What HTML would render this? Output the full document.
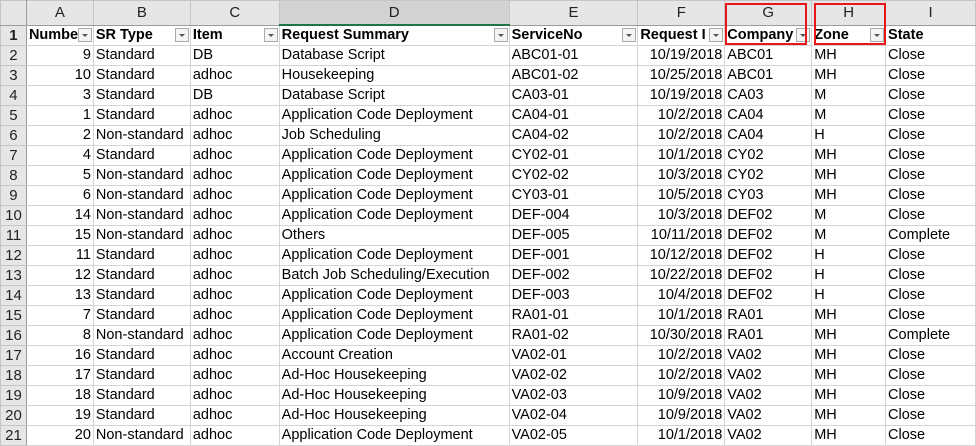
<!DOCTYPE html><html><head><style>
body{margin:0;width:976px;height:445px;overflow:hidden;background:#fff;font-family:"Liberation Sans",Arial,sans-serif;font-size:14.5px;}
table{border-collapse:collapse;table-layout:fixed;position:absolute;left:0;top:0}
td{height:19px;padding:0 2px;border:1px solid #d4d4d4;white-space:nowrap;overflow:hidden;line-height:19px;position:relative}
tr.h td{height:23px;background:#e6e6e6;text-align:center;color:#222;font-size:15px;border-color:#c6c6c6;border-bottom:1px solid #9b9b9b}
td.rh{background:#e6e6e6;text-align:center;color:#222;border-color:#c6c6c6;border-right:1px solid #9b9b9b;font-size:15px;padding:0}
tr.h td.sel{background:#d2d2d2;border-bottom:2px solid #217346}
tr.f td{font-weight:bold}
.r{text-align:right}
.dd{position:absolute;right:1px;top:2px;width:14px;height:14px;border:1px solid #aaa;background:#f4f4f4;box-sizing:border-box}
.dd:after{content:"";position:absolute;left:3px;top:5px;border-left:3px solid transparent;border-right:3px solid transparent;border-top:3px solid #555}
.box{position:absolute;border:2px solid #e8161b;box-sizing:border-box}
</style></head><body>
<table>
<colgroup><col style="width:26px"><col style="width:67px"><col style="width:97px"><col style="width:89px"><col style="width:230px"><col style="width:129px"><col style="width:87px"><col style="width:87px"><col style="width:74px"><col style="width:90px"></colgroup>
<tr class="h"><td style="border-right:1px solid #9b9b9b"></td><td>A</td><td>B</td><td>C</td><td class="sel">D</td><td>E</td><td>F</td><td>G</td><td>H</td><td>I</td></tr>
<tr class="f"><td class="rh">1</td><td>Numbe<span class="dd"></span></td><td>SR Type<span class="dd"></span></td><td>Item<span class="dd"></span></td><td>Request Summary<span class="dd"></span></td><td>ServiceNo<span class="dd"></span></td><td>Request I<span class="dd"></span></td><td>Company<span class="dd"></span></td><td>Zone<span class="dd"></span></td><td>State</td></tr>
<tr><td class="rh">2</td><td class="r">9</td><td>Standard</td><td>DB</td><td>Database Script</td><td>ABC01-01</td><td class="r">10/19/2018</td><td>ABC01</td><td>MH</td><td>Close</td></tr>
<tr><td class="rh">3</td><td class="r">10</td><td>Standard</td><td>adhoc</td><td>Housekeeping</td><td>ABC01-02</td><td class="r">10/25/2018</td><td>ABC01</td><td>MH</td><td>Close</td></tr>
<tr><td class="rh">4</td><td class="r">3</td><td>Standard</td><td>DB</td><td>Database Script</td><td>CA03-01</td><td class="r">10/19/2018</td><td>CA03</td><td>M</td><td>Close</td></tr>
<tr><td class="rh">5</td><td class="r">1</td><td>Standard</td><td>adhoc</td><td>Application Code Deployment</td><td>CA04-01</td><td class="r">10/2/2018</td><td>CA04</td><td>M</td><td>Close</td></tr>
<tr><td class="rh">6</td><td class="r">2</td><td>Non-standard</td><td>adhoc</td><td>Job Scheduling</td><td>CA04-02</td><td class="r">10/2/2018</td><td>CA04</td><td>H</td><td>Close</td></tr>
<tr><td class="rh">7</td><td class="r">4</td><td>Standard</td><td>adhoc</td><td>Application Code Deployment</td><td>CY02-01</td><td class="r">10/1/2018</td><td>CY02</td><td>MH</td><td>Close</td></tr>
<tr><td class="rh">8</td><td class="r">5</td><td>Non-standard</td><td>adhoc</td><td>Application Code Deployment</td><td>CY02-02</td><td class="r">10/3/2018</td><td>CY02</td><td>MH</td><td>Close</td></tr>
<tr><td class="rh">9</td><td class="r">6</td><td>Non-standard</td><td>adhoc</td><td>Application Code Deployment</td><td>CY03-01</td><td class="r">10/5/2018</td><td>CY03</td><td>MH</td><td>Close</td></tr>
<tr><td class="rh">10</td><td class="r">14</td><td>Non-standard</td><td>adhoc</td><td>Application Code Deployment</td><td>DEF-004</td><td class="r">10/3/2018</td><td>DEF02</td><td>M</td><td>Close</td></tr>
<tr><td class="rh">11</td><td class="r">15</td><td>Non-standard</td><td>adhoc</td><td>Others</td><td>DEF-005</td><td class="r">10/11/2018</td><td>DEF02</td><td>M</td><td>Complete</td></tr>
<tr><td class="rh">12</td><td class="r">11</td><td>Standard</td><td>adhoc</td><td>Application Code Deployment</td><td>DEF-001</td><td class="r">10/12/2018</td><td>DEF02</td><td>H</td><td>Close</td></tr>
<tr><td class="rh">13</td><td class="r">12</td><td>Standard</td><td>adhoc</td><td>Batch Job Scheduling/Execution</td><td>DEF-002</td><td class="r">10/22/2018</td><td>DEF02</td><td>H</td><td>Close</td></tr>
<tr><td class="rh">14</td><td class="r">13</td><td>Standard</td><td>adhoc</td><td>Application Code Deployment</td><td>DEF-003</td><td class="r">10/4/2018</td><td>DEF02</td><td>H</td><td>Close</td></tr>
<tr><td class="rh">15</td><td class="r">7</td><td>Standard</td><td>adhoc</td><td>Application Code Deployment</td><td>RA01-01</td><td class="r">10/1/2018</td><td>RA01</td><td>MH</td><td>Close</td></tr>
<tr><td class="rh">16</td><td class="r">8</td><td>Non-standard</td><td>adhoc</td><td>Application Code Deployment</td><td>RA01-02</td><td class="r">10/30/2018</td><td>RA01</td><td>MH</td><td>Complete</td></tr>
<tr><td class="rh">17</td><td class="r">16</td><td>Standard</td><td>adhoc</td><td>Account Creation</td><td>VA02-01</td><td class="r">10/2/2018</td><td>VA02</td><td>MH</td><td>Close</td></tr>
<tr><td class="rh">18</td><td class="r">17</td><td>Standard</td><td>adhoc</td><td>Ad-Hoc Housekeeping</td><td>VA02-02</td><td class="r">10/2/2018</td><td>VA02</td><td>MH</td><td>Close</td></tr>
<tr><td class="rh">19</td><td class="r">18</td><td>Standard</td><td>adhoc</td><td>Ad-Hoc Housekeeping</td><td>VA02-03</td><td class="r">10/9/2018</td><td>VA02</td><td>MH</td><td>Close</td></tr>
<tr><td class="rh">20</td><td class="r">19</td><td>Standard</td><td>adhoc</td><td>Ad-Hoc Housekeeping</td><td>VA02-04</td><td class="r">10/9/2018</td><td>VA02</td><td>MH</td><td>Close</td></tr>
<tr><td class="rh">21</td><td class="r">20</td><td>Non-standard</td><td>adhoc</td><td>Application Code Deployment</td><td>VA02-05</td><td class="r">10/1/2018</td><td>VA02</td><td>MH</td><td>Close</td></tr>
</table>
<div class="box" style="left:725px;top:3px;width:82px;height:42px"></div>
<div class="box" style="left:814px;top:3px;width:72px;height:42px"></div>
</body></html>
